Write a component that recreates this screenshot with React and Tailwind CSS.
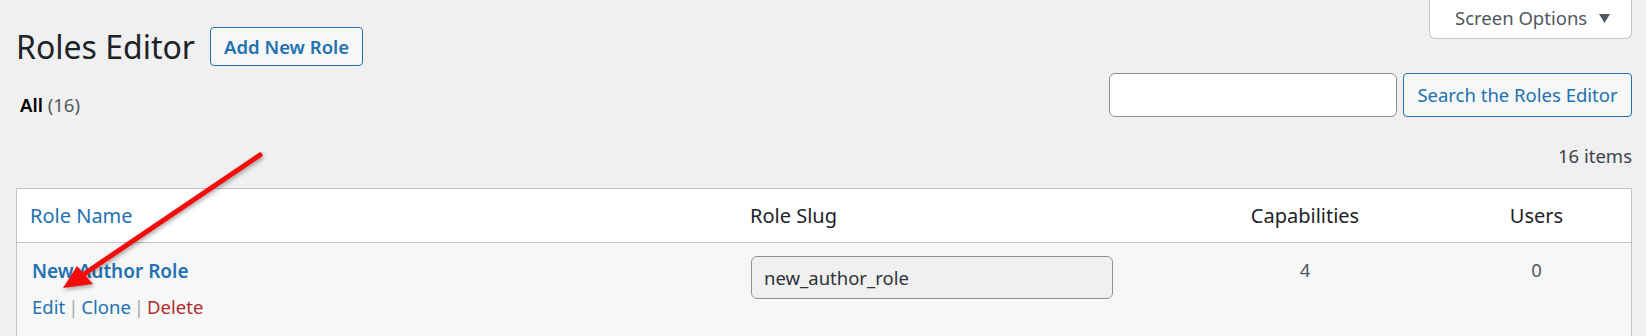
import React from "react"

const RedArrow = () => (
  <svg
    className="absolute left-0 top-0 pointer-events-none"
    width="300"
    height="320"
    viewBox="0 0 300 320"
  >
    <defs>
      <filter id="arrowShadow" x="-20%" y="-20%" width="140%" height="140%">
        <feDropShadow dx="1" dy="2" stdDeviation="2" floodColor="#000" floodOpacity="0.35" />
      </filter>
    </defs>
    <g filter="url(#arrowShadow)">
      <line x1="260" y1="155" x2="84" y2="274" stroke="#f20d0d" strokeWidth="5" strokeLinecap="round" />
      <polygon points="63,288 77,266 93,284" fill="#f20d0d" />
    </g>
  </svg>
)

export default function App() {
  return (
    <div className="relative h-[336px] overflow-hidden bg-[#f0f0f1] pl-4 pr-[14px] font-['Noto_Sans',sans-serif] text-[#3c434a]">
      {/* screen options tab */}
      <div className="float-right flex h-[39px] w-[203px] items-center gap-[12px] rounded-b-[6px] border border-t-0 border-[#c3c4c7] bg-white pb-[2px] pl-[25px] text-[18.5px] text-[#50575e]">
        <span className="leading-none">Screen Options</span>
        <svg width="11" height="9" viewBox="0 0 11 9">
          <polygon points="0,0 11,0 5.5,9" fill="#50575e" />
        </svg>
      </div>

      <div className="flex items-center pt-[27px]">
        <h1 className="text-[32px] font-normal leading-none text-[#1d2327]">Roles Editor</h1>
        <button className="ml-[15px] h-[39px] rounded-[4px] border border-[#2271b1] bg-[#f6f7f7] px-[13px] text-[18.5px] font-semibold text-[#2271b1]">
          Add New Role
        </button>
      </div>

      <div className="mt-[7px] flex items-start justify-between">
        <div className="mt-[18px] pl-[4px] text-[18.5px] leading-[28px]">
          <span className="font-semibold text-[#000]">All</span>{" "}
          <span className="text-[#50575e]">(16)</span>
        </div>
        <div className="flex gap-[6px]">
          <input
            type="text"
            className="h-[44px] w-[288px] rounded-[6px] border border-[#8c8f94] bg-white px-3 outline-none"
          />
          <button className="h-[44px] w-[229px] rounded-[4px] border border-[#2271b1] bg-[#f6f7f7] text-[18.5px] text-[#2271b1]">
            Search the Roles Editor
          </button>
        </div>
      </div>

      <div className="mt-[23px] text-right text-[18.5px] leading-[28px] text-[#3c434a]">16 items</div>

      <div className="mt-[18px] border border-[#c3c4c7] bg-white">
        <div className="grid grid-cols-[718px_433px_274px_1fr] border-b border-[#c3c4c7] text-[20px] leading-[29px] text-[#1d2327]">
          <div className="py-3 pl-[13px] text-[#2271b1]">Role Name</div>
          <div className="py-3 pl-[15px]">Role Slug</div>
          <div className="py-3 text-center">Capabilities</div>
          <div className="py-3 text-center">Users</div>
        </div>
        <div className="grid grid-cols-[718px_433px_274px_1fr] bg-[#f6f7f7] pb-6 text-[18.5px]">
          <div className="pl-[15px] pt-[14px]">
            <div className="text-[19px] font-semibold leading-[28px] text-[#2271b1]">New Author Role</div>
            <div className="mt-[8px] leading-[28px]">
              <span className="text-[#2271b1]">Edit</span>
              <span className="px-[3px] text-[#a7aaad]">|</span>
              <span className="text-[#2271b1]">Clone</span>
              <span className="px-[3px] text-[#a7aaad]">|</span>
              <span className="text-[#b32d2e]">Delete</span>
            </div>
          </div>
          <div className="pl-[16px] pt-[13px]">
            <div className="flex h-[43px] w-[362px] items-center rounded-[6px] border border-[#8c8f94] bg-[#f0f0f1] pl-[12px] text-[#2c3338]">
              new_author_role
            </div>
          </div>
          <div className="pt-[13px] text-center leading-[28px] text-[#50575e]">4</div>
          <div className="pt-[13px] text-center leading-[28px] text-[#50575e]">0</div>
        </div>
      </div>

      <RedArrow />
    </div>
  )
}
